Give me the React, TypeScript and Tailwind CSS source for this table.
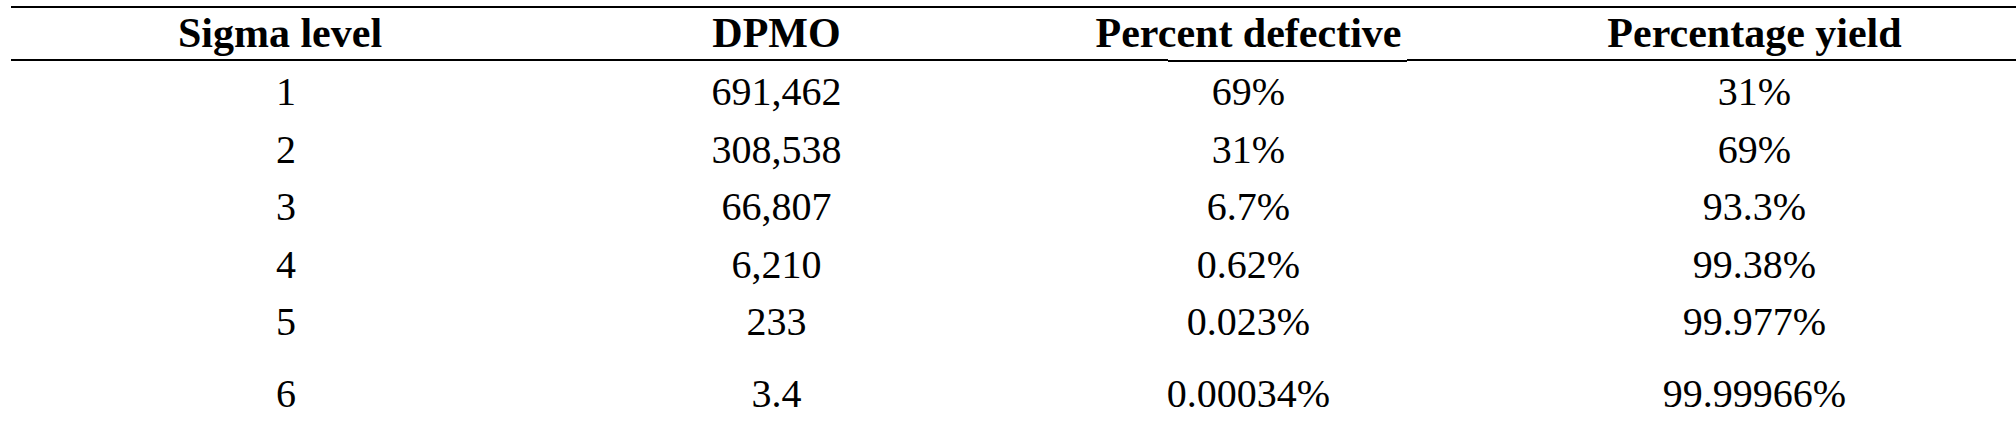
const rows = [
  ['1', '691,462', '69%', '31%'],
  ['2', '308,538', '31%', '69%'],
  ['3', '66,807', '6.7%', '93.3%'],
  ['4', '6,210', '0.62%', '99.38%'],
  ['5', '233', '0.023%', '99.977%'],
  ['6', '3.4', '0.00034%', '99.99966%'],
]

const headers = ['Sigma level', 'DPMO', 'Percent defective', 'Percentage yield']

const cols = 'grid grid-cols-[538px_455px_489px_1fr]'

export default function App() {
  return (
    <div className="w-[2016px] h-[432px] bg-white text-black pl-[11px] pt-[6px] [font-family:'Liberation_Serif','Times_New_Roman',serif] overflow-hidden">
      {/* top rule */}
      <div className="h-[2px] bg-black" />

      {/* header */}
      <div className={`${cols} h-[51px] text-[42px] leading-[51px] font-bold`}>
        {headers.map((h) => (
          <div key={h} className="text-center whitespace-nowrap">
            {h}
          </div>
        ))}
      </div>

      {/* header rule, with the small step under "Percent defective" */}
      <div className="flex items-start h-[3px]">
        <div className="w-[1157px] h-[2px] bg-black" />
        <div className="w-[239px] h-[2px] mt-[1px] bg-black" />
        <div className="flex-1 h-[2px] bg-black" />
      </div>

      {/* body */}
      <div className="text-[40px] pt-[1px]">
        {rows.map((r, i) => (
          <div
            key={r[0]}
            className={
              i === rows.length - 1
                ? `${cols} h-[72px] pt-[14.5px] leading-[57.5px]`
                : `${cols} h-[57.5px] leading-[57.5px]`
            }
          >
            {r.map((c, j) => (
              <div key={j} className={j === 0 ? 'text-center whitespace-nowrap pl-[12px]' : 'text-center whitespace-nowrap'}>
                {c}
              </div>
            ))}
          </div>
        ))}
      </div>
    </div>
  )
}
